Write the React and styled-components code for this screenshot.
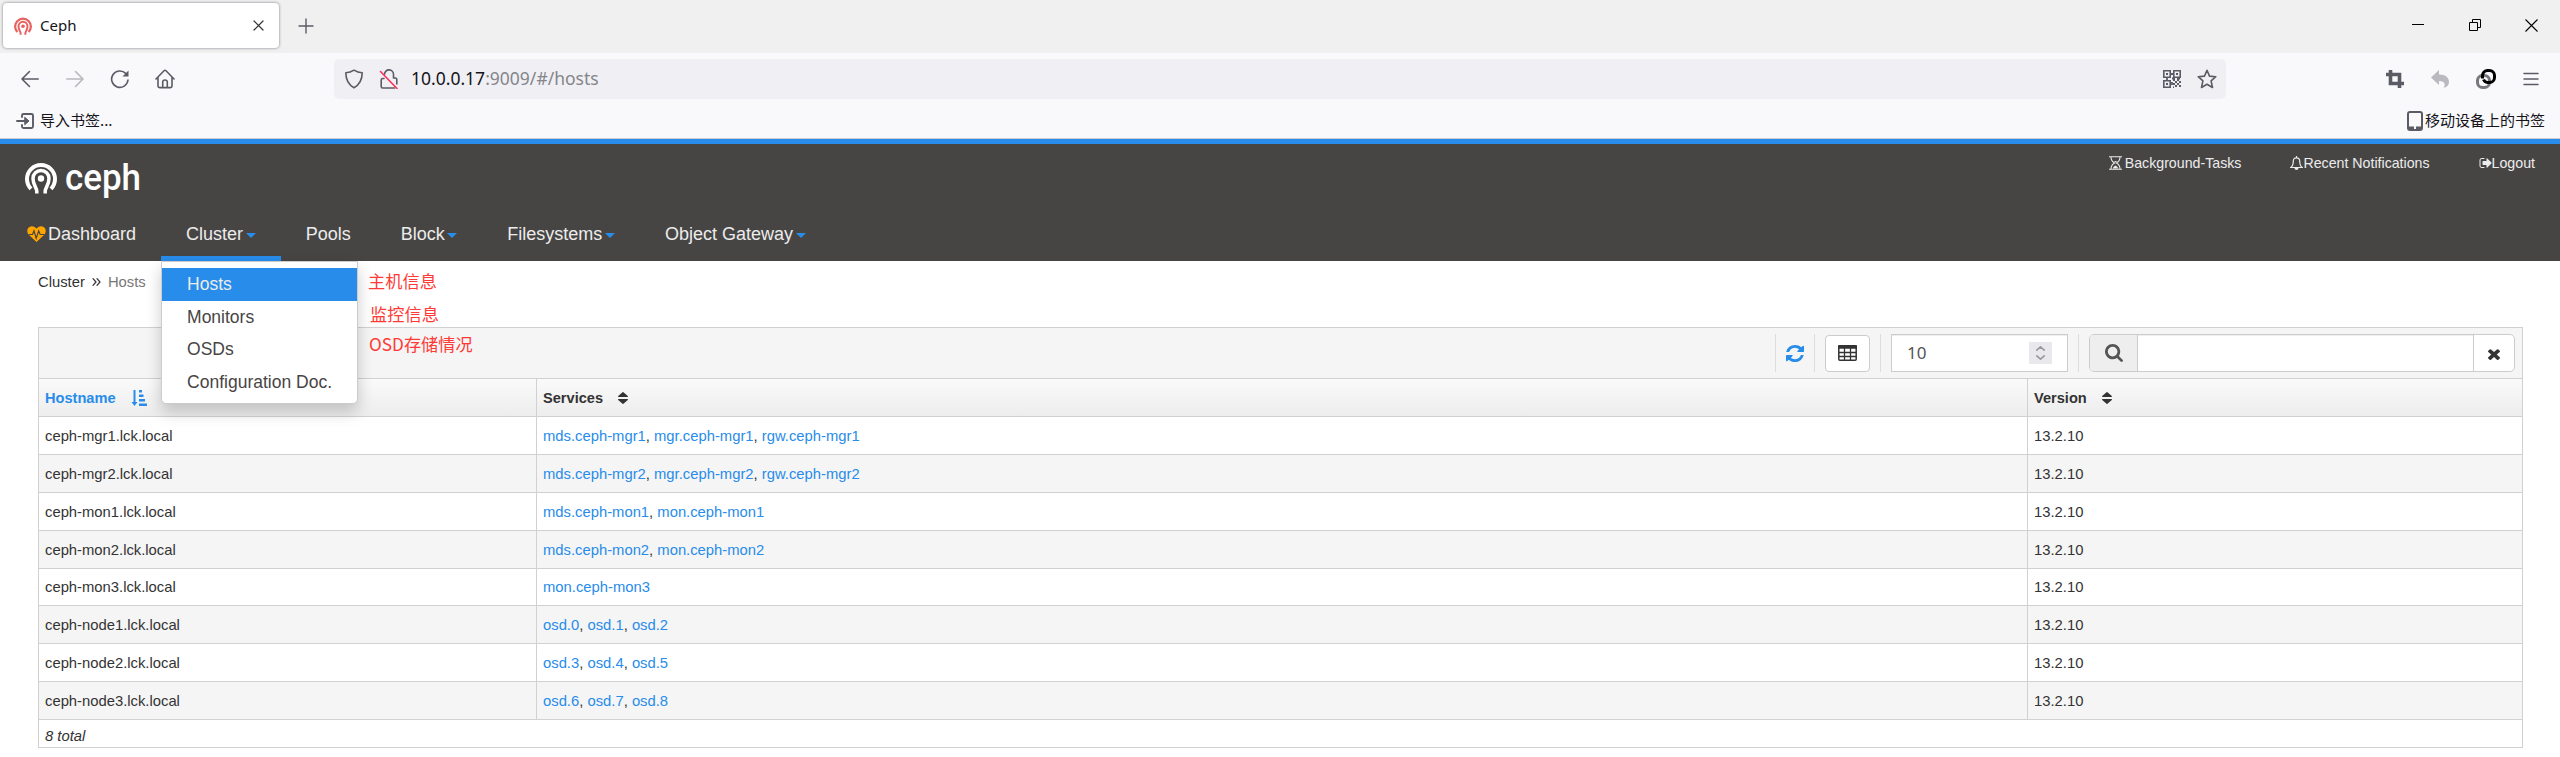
import styled, { createGlobalStyle, css } from 'styled-components';

const hosts = [
  { name: 'ceph-mgr1.lck.local', services: ['mds.ceph-mgr1', 'mgr.ceph-mgr1', 'rgw.ceph-mgr1'] },
  { name: 'ceph-mgr2.lck.local', services: ['mds.ceph-mgr2', 'mgr.ceph-mgr2', 'rgw.ceph-mgr2'] },
  { name: 'ceph-mon1.lck.local', services: ['mds.ceph-mon1', 'mon.ceph-mon1'] },
  { name: 'ceph-mon2.lck.local', services: ['mds.ceph-mon2', 'mon.ceph-mon2'] },
  { name: 'ceph-mon3.lck.local', services: ['mon.ceph-mon3'] },
  { name: 'ceph-node1.lck.local', services: ['osd.0', 'osd.1', 'osd.2'] },
  { name: 'ceph-node2.lck.local', services: ['osd.3', 'osd.4', 'osd.5'] },
  { name: 'ceph-node3.lck.local', services: ['osd.6', 'osd.7', 'osd.8'] },
];

const menu = ['Hosts', 'Monitors', 'OSDs', 'Configuration Doc.'];

const paths = {
  refresh: 'M1511 1056q0 5-1 7-64 268-268 434.500t-478 166.500q-146 0-282.500-55t-243.500-157l-129 129q-19 19-45 19t-45-19-19-45v-448q0-26 19-45t45-19h448q26 0 45 19t19 45-19 45l-137 137q71 66 161 102t187 36q134 0 250-65t186-179q11-17 53-117 8-23 30-23h192q13 0 22.500 9.500t9.500 22.500zm25-800v448q0 26-19 45t-45 19h-448q-26 0-45-19t-19-45 19-45l138-138q-148-137-349-137-134 0-250 65t-186 179q-11 17-53 117-8 23-30 23h-199q-13 0-22.500-9.500t-9.500-22.500v-7q65-268 270-434.500t480-166.500q146 0 284 55.500t245 156.500l130-129q19-19 45-19t45 19 19 45z',
  times: 'M1490 1322q0 40-28 68l-136 136q-28 28-68 28t-68-28l-294-294-294 294q-28 28-68 28t-68-28l-136-136q-28-28-28-68t28-68l294-294-294-294q-28-28-28-68t28-68l136-136q28-28 68-28t68 28l294 294 294-294q28-28 68-28t68 28l136 136q28 28 28 68t-28 68l-294 294 294 294q28 28 28 68z',
  search: 'M1216 832q0-185-131.500-316.500t-316.500-131.500-316.500 131.500-131.500 316.500 131.500 316.500 316.500 131.500 316.500-131.500 131.500-316.500zm512 832q0 52-38 90t-90 38q-54 0-90-38l-343-342q-179 124-399 124-143 0-273.500-55.500t-225-150-150-225-55.500-273.500 55.500-273.500 150-225 225-150 273.500-55.500 273.500 55.500 225 150 150 225 55.500 273.500q0 220-124 399l343 343q37 37 37 90z',
  sort: 'M1408 1088q0 26-19 45l-448 448q-19 19-45 19t-45-19l-448-448q-19-19-19-45t19-45 45-19h896q26 0 45 19t19 45zm0-384q0 26-19 45t-45 19h-896q-26 0-45-19t-19-45 19-45l448-448q19-19 45-19t45 19l448 448q19 19 19 45z',
  signOut: 'M704 1440q0 4 1 20t.5 26.500-3 23.500-10 19.500-20.500 6.500h-320q-119 0-203.500-84.500t-84.500-203.500v-704q0-119 84.500-203.500t203.500-84.500h320q13 0 22.500 9.500t9.500 22.500q0 4 1 20t.5 26.500-3 23.500-10 19.500-20.500 6.500h-320q-66 0-113 47t-47 113v704q0 66 47 113t113 47h312l11.500 1 11.500 3 8 5.500 7 9 2 13.500zm928-544q0 26-19 45l-544 544q-19 19-45 19t-45-19-19-45v-288h-448q-26 0-45-19t-19-45v-384q0-26 19-45t45-19h448v-288q0-26 19-45t45-19 45 19l544 544q19 19 19 45z',
};

const Glyph = ({ d, box, w, h }) => (
  <svg viewBox={box} width={w} height={h} fill="currentColor" preserveAspectRatio="none"><path d={d} /></svg>
);

const CephMark = ({ size }) => (
  <svg width={size} height={size} viewBox="0 0 32 32" fill="none" stroke="currentColor">
    <path d="M6 26.800A14 14 0 1 1 26 26.800" strokeWidth="4" />
    <path d="M11.800 31.500V29C11.800 26 8 23 8 16.500A8 8 0 0 1 24 16.500C24 23 20.200 26 20.200 29V31.500" strokeWidth="3.500" />
    <circle cx="16" cy="16.500" r="3.200" fill="currentColor" stroke="none" />
  </svg>
);

const Line = ({ w = 20, h = 20, box = '0 0 20 20', sw = 1.6, children }) => (
  <svg width={w} height={h} viewBox={box} fill="none" stroke="currentColor" strokeWidth={sw} strokeLinecap="round" strokeLinejoin="round">{children}</svg>
);

export default function App() {
  return (
    <>
      <GlobalStyle />
      <TabStrip>
        <Tab>
          <Favicon><CephMark size={18} /></Favicon>
          <TabTitle>Ceph</TabTitle>
          <Line w={11} h={11} box="0 0 11 11" sw={1.2}><path d="M1 1l9 9M10 1l-9 9" /></Line>
        </Tab>
        <NewTab>
          <Line w={16} h={16} box="0 0 16 16" sw={1.4}><path d="M8 1v14M1 8h14" /></Line>
        </NewTab>
        <WindowButtons>
          <svg width="12" height="12" fill="none" stroke="#000"><path d="M0 5.500h12" /></svg>
          <svg width="12" height="12" fill="none" stroke="#000"><path d="M.5 3.500h8v8h-8zM3.500 3.500v-3h8v8h-3" /></svg>
          <svg width="13" height="13" fill="none" stroke="#000" strokeWidth="1.100"><path d="M.5.500l12 12M12.500.500l-12 12" /></svg>
        </WindowButtons>
      </TabStrip>

      <NavBar>
        <NavButtons>
          <Line><path d="M18.200 10H2M9.500 2.500L2 10l7.500 7.500" /></Line>
          <Faded><Line><path d="M1.800 10H18M10.500 2.500L18 10l-7.500 7.500" /></Line></Faded>
          <Line>
            <path d="M18 11a8.200 8.200 0 1 1-2.300-6.600" />
            <path d="M18.500 1.500v6h-6z" fill="currentColor" stroke="none" />
          </Line>
          <Line>
            <path d="M1 10l8-8.300a1.400 1.400 0 0 1 2 0l8 8.300M3 8.500V17a1.600 1.600 0 0 0 1.600 1.600h10.800A1.600 1.600 0 0 0 17 17V8.500M7.700 18.500v-5.200a2.300 2.300 0 0 1 4.600 0v5.200" />
          </Line>
        </NavButtons>
        <UrlBar>
          <Line>
            <path d="M10 1.200c2.500 1.700 5.300 2.500 8.200 2.600 0 7-2 11.500-8.200 15C3.800 15.300 1.800 10.800 1.800 3.800 4.700 3.700 7.500 2.900 10 1.200z" />
          </Line>
          <LockIcon>
            <Line>
              <path d="M5.500 5.200a4.500 4.500 0 0 1 9 .300V9h1.800a1.500 1.500 0 0 1 1.500 1.500V15M5 9.500H3.700a1.500 1.500 0 0 0-1.500 1.500v6.500A1.500 1.500 0 0 0 3.700 19h12" />
              <path d="M1.500 2.500l16.500 17" stroke="#ff2f5c" />
            </Line>
          </LockIcon>
          <UrlText>10.0.0.17<span>:9009/#/hosts</span></UrlText>
          <svg width="18" height="18" viewBox="0 0 18 18" fill="none" stroke="#5b5b66" strokeWidth="1.600">
            <path d="M.8.800h6.400v6.400H.8zM10.800.800h6.400v6.400h-6.400zM.8 10.800h6.400v6.400H.8z" />
            <path d="M3 4h2M13 4h2M3 14h2" strokeWidth="2" />
            <path d="M10 10h2M14 10h2M12 12h2M16 12h2M10 14h2M14 14h2M12 16h2M16 16h2M10 17.500h1M7 4h4M4 7v4M9 8.500h3M14 8.500h3M9 12v3" strokeWidth="1.800" />
          </svg>
          <StarIcon>
            <Line><path d="M10 1.300l2.500 5.800 6.300.600-4.700 4.200 1.400 6.600L10 15.200l-5.500 3.300 1.400-6.600L1.200 7.700l6.300-.6z" /></Line>
          </StarIcon>
        </UrlBar>
        <Extensions>
          <svg width="18" height="18" fill="none" stroke="currentColor" strokeWidth="3.600"><path d="M0 4.500h13.500V18M4.500 0v13.500H18" /></svg>
          <Faded>
            <svg width="18" height="18" fill="currentColor"><path d="M8 0v4.500c6.500 0 10 3 10 7.500 0 3-1.800 5-5.500 6 2-2.500 2.300-7-4.500-7V15L0 7.500z" /></svg>
          </Faded>
          <svg width="20" height="20" fill="none" strokeWidth="3">
            <rect x="1.500" y="6.500" width="12" height="12" rx="5" stroke="#77777c" />
            <path d="M6.500 9.500v-3a5 5 0 0 1 5-5h2a5 5 0 0 1 5 5v2a5 5 0 0 1-5 5h-2a5 5 0 0 1-4-3" stroke="#000" />
          </svg>
          <Line w={16} h={14} box="0 0 16 14" sw={1.5}><path d="M1 1.500h14M1 7h14M1 12.500h14" /></Line>
        </Extensions>
      </NavBar>

      <BookmarkBar>
        <Bookmark $gap={6}>
          <Line w={18} h={16} box="0 0 18 16" sw={1.9}>
            <path d="M6 4V2.500A1.500 1.500 0 0 1 7.500 1h8A1.500 1.500 0 0 1 17 2.500v11a1.500 1.500 0 0 1-1.500 1.500h-8A1.500 1.500 0 0 1 6 13.500V12M1 8h9" />
            <path d="M9 4.500L13 8l-4 3.500z" fill="currentColor" strokeWidth="1" />
          </Line>
          <span>导入书签...</span>
        </Bookmark>
        <Bookmark $gap={2}>
          <svg width="16" height="20" fill="none" stroke="currentColor">
            <rect x="1" y="1" width="14" height="18" rx="2" strokeWidth="2" />
            <path d="M2 17h5M9 17h5" strokeWidth="3" />
          </svg>
          <span>移动设备上的书签</span>
        </Bookmark>
      </BookmarkBar>

      <Header>
        <TopRow>
          <Logo>
            <CephMark size={32} />
            <svg width="78" height="52" fill="currentColor">
              <text x="0" y="37" textLength="76" lengthAdjust="spacingAndGlyphs" fontFamily="Roboto, sans-serif" fontWeight="500" fontSize="36">ceph</text>
            </svg>
          </Logo>
          <UserLinks>
            <UserLink $gap={2}>
              <svg width="14" height="14" fill="none" stroke="currentColor" strokeWidth="1.100">
                <path d="M0 .7h13M0 13.300h13M2 1c0 3 1 4.500 3.500 6C3 8.500 2 10 2 13M11 1c0 3-1 4.500-3.500 6C10 8.500 11 10 11 13" />
                <path d="M4 12.500c0-1.500 1-2 2.500-3 1.500 1 2.500 1.500 2.500 3zM5 5h3L6.500 6.500z" fill="currentColor" stroke="none" />
              </svg>
              Background-Tasks
            </UserLink>
            <UserLink>
              <svg width="13" height="15" fill="none" stroke="currentColor" strokeWidth="1.200">
                <path d="M.8 11.500c2-1.500 2.500-3.500 2.500-6.500 0-2 1.200-3.200 3.200-3.200S9.700 3 9.700 5c0 3 .5 5 2.500 6.500zM6.500 0v2" />
                <path d="M4.500 12h4a2 2 0 0 1-4 0z" fill="currentColor" stroke="none" />
              </svg>
              Recent Notifications
            </UserLink>
            <UserLink>
              <Glyph d={paths.signOut} box="0 128 1664 1536" w={13} h={12} />
              Logout
            </UserLink>
          </UserLinks>
        </TopRow>
        <MainNav>
          <NavItem>
            <HeartIcon>
              <svg width="19" height="16" viewBox="0 0 19 16">
                <path d="M9.500 16L2 9C-1 6 0 .300 4.800.300 7 .300 8.500 1.500 9.500 2.700 10.500 1.500 12 .300 14.200.300 19 .300 20 6 17 9z" fill="#ffa500" />
                <path d="M1.500 8.500h4l1.500-3.600 2.200 7.300 2.500-7.300 1.500 3.600h4.300" fill="none" stroke="#474544" strokeWidth="1.200" />
              </svg>
            </HeartIcon>
            Dashboard
          </NavItem>
          <NavItem $active>
            Cluster<Caret />
            <Dropdown>
              {menu.map((m, i) => <DropdownItem key={m} $active={i === 0}>{m}</DropdownItem>)}
              <Note $x={206} $y={9}>主机信息</Note>
              <Note $x={208} $y={42}>监控信息</Note>
              <Note $x={207} $y={72}>OSD存储情况</Note>
            </Dropdown>
          </NavItem>
          <NavItem>Pools</NavItem>
          <NavItem>Block<Caret /></NavItem>
          <NavItem>Filesystems<Caret /></NavItem>
          <NavItem>Object Gateway<Caret /></NavItem>
        </MainNav>
      </Header>

      <Content>
        <Breadcrumb>
          Cluster
          <Line w={9} h={8} box="0 0 9 8" sw={1.2}><path d="M1 .700L4 4 1 7.300M5 .700L8 4 5 7.300" /></Line>
          <span>Hosts</span>
        </Breadcrumb>
        <DataTable>
          <Toolbar>
            <ToolGroup $w={39.5} $blue>
              <Glyph d={paths.refresh} box="0 128 1536 1536" w={18} h={17} />
            </ToolGroup>
            <ToolGroup $w={66}>
              <ColumnsButton>
                <svg width="19" height="16" fill="none" stroke="currentColor">
                  <rect x=".8" y=".8" width="17.400" height="14.400" rx="1" strokeWidth="1.500" />
                  <path d="M0 2h19" strokeWidth="3.500" />
                  <path d="M6.500 2v13M12.500 2v13M1 7.500h17M1 11.500h17" strokeWidth="1.300" />
                </svg>
              </ColumnsButton>
            </ToolGroup>
            <ToolGroup $w={198}>
              <PageSize>
                <span>10</span>
                <Spinner>
                  <Line w={9} h={14} box="0 0 9 14" sw={1.7}><path d="M.8 4.200L4.500.800l3.700 3.400M.8 9.800l3.700 3.400 3.700-3.400" /></Line>
                </Spinner>
              </PageSize>
            </ToolGroup>
            <ToolGroup $w={444}>
              <SearchBox>
                <Addon><Glyph d={paths.search} box="64 128 1664 1664" w={18} h={18} /></Addon>
                <SearchInput />
                <ClearButton><Glyph d={paths.times} box="302 238 1188 1316" w={12} h={12} /></ClearButton>
              </SearchBox>
            </ToolGroup>
          </Toolbar>
          <HeadRow>
            <Cell $blue>
              Hostname
              <svg width="16" height="16" fill="currentColor">
                <path d="M2.500 0h2v12H6.500L3.500 16 .500 12h2zM8 0h3v2.500H8zM8 4.500h4.500V7H8zM8 9h6v2.500H8zM8 13.500h8V16H8z" />
              </svg>
            </Cell>
            <Cell>Services<Glyph d={paths.sort} box="384 192 1024 1408" w={10} h={12} /></Cell>
            <Cell>Version<Glyph d={paths.sort} box="384 192 1024 1408" w={10} h={12} /></Cell>
          </HeadRow>
          {hosts.map((h) => (
            <Row key={h.name}>
              <Cell>{h.name}</Cell>
              <Cell>
                <div>
                  {h.services.map((s, i) => (
                    <span key={s}>{i > 0 && ', '}<ServiceLink>{s}</ServiceLink></span>
                  ))}
                </div>
              </Cell>
              <Cell>13.2.10</Cell>
            </Row>
          ))}
          <Footer>8 total</Footer>
        </DataTable>
      </Content>
    </>
  );
}

const GlobalStyle = createGlobalStyle`
* {
  box-sizing: border-box;
}
body {
  margin: 0;
  background: #fff;
  font-family: "Liberation Sans", "Noto Sans CJK SC", sans-serif;
  font-size: 14.8px;
  color: #333;
}
svg {
  display: block;
  flex: none;
}
`;

const TabStrip = styled.div`
display: flex;
height: 53px;
padding: 3px 22px 0 3px;
background: #f0f0f0;
`;

const Tab = styled.div`
display: flex;
align-items: center;
width: 276px;
height: 45px;
padding: 0 15px 0 11px;
border-radius: 4px;
background: #fff;
box-shadow: 0 0 3px rgba(40, 40, 60, 0.6);
color: #333;
`;

const Favicon = styled.div`
color: #e9605f;
`;

const TabTitle = styled.div`
flex: 1;
padding: 0 0 1px 8px;
font: 15px "Noto Sans", sans-serif;
color: #15141a;
`;

const NewTab = styled.div`
padding: 15px 0 0 19px;
color: #5b5b66;
`;

const WindowButtons = styled.div`
display: flex;
gap: 44px;
margin-left: auto;
padding-top: 16px;
svg:first-child {
  margin-right: 1px;
}
`;

const NavBar = styled.div`
display: flex;
align-items: center;
height: 51px;
padding: 0 21px 0 20px;
background: #f9f9fb;
color: #5b5b66;
`;

const NavButtons = styled.div`
display: flex;
gap: 25px;
width: 314px;
`;

const Faded = styled.div`
opacity: 0.4;
`;

const UrlBar = styled.div`
display: flex;
align-items: center;
width: 1892px;
height: 40px;
padding: 0 9px 0 10px;
border-radius: 5px;
background: #f0f0f4;
`;

const LockIcon = styled.div`
padding-left: 15px;
`;

const StarIcon = styled.div`
padding-left: 16px;
`;

const UrlText = styled.div`
flex: 1;
padding: 0 0 1px 12px;
font: 17.5px "Noto Sans", sans-serif;
color: #15141a;
span {
  color: #85858b;
}
`;

const Extensions = styled.div`
display: flex;
align-items: center;
gap: 27px;
margin-left: auto;
`;

const BookmarkBar = styled.div`
display: flex;
justify-content: space-between;
height: 35px;
padding: 0 15px 0 16px;
border-bottom: 1px solid #ccc;
background: #f9f9fb;
`;

const Bookmark = styled.div`
display: flex;
align-items: center;
gap: ${(p) => p.$gap}px;
height: 34px;
font: 15px "Noto Sans CJK SC", sans-serif;
color: #15141a;
svg {
  color: #5b5b66;
}
span {
  padding-bottom: 3px;
}
`;

const Header = styled.div`
display: flex;
flex-direction: column;
height: 122px;
border-top: 5px solid #288cea;
background: #474544;
color: #ececec;
`;

const TopRow = styled.div`
display: flex;
justify-content: space-between;
flex: 1;
padding: 0 25px;
`;

const Logo = styled.div`
display: flex;
gap: 8px;
height: 40px;
padding-top: 18px;
color: #fff;
svg:last-child {
  margin-top: -9px;
}
`;

const UserLinks = styled.div`
display: flex;
gap: 49px;
height: 38px;
`;

const UserLink = styled.div`
display: flex;
align-items: center;
gap: ${(p) => p.$gap || 0}px;
font-size: 14.2px;
`;

const MainNav = styled.div`
display: flex;
height: 55px;
`;

const NavItem = styled.div`
position: relative;
display: flex;
align-items: center;
padding: 7px 25px 0;
border-bottom: 5px solid ${(p) => (p.$active ? '#288cea' : 'transparent')};
font-size: 18px;
`;

const HeartIcon = styled.div`
width: 23px;
padding: 0 0 2px 2px;
`;

const Caret = styled.i`
margin: 2px 0 0 2.6px;
border-top: 5px solid #288cea;
border-left: 5px solid transparent;
border-right: 5px solid transparent;
`;

const Dropdown = styled.div`
position: absolute;
z-index: 2;
top: 55px;
left: 0;
width: 197px;
height: 143px;
padding: 6px 0;
border: 1px solid #ccc;
border-radius: 0 0 5px 5px;
background: #fff;
box-shadow: 0 8px 16px rgba(0, 0, 0, 0.2);
font-size: 17.5px;
`;

const DropdownItem = styled.div`
height: 32.7px;
padding-left: 25px;
line-height: 32px;
color: ${(p) => (p.$active ? '#ececec' : '#474544')};
background: ${(p) => (p.$active ? '#288cea' : 'none')};
`;

// red remarks written beside the open menu
const Note = styled.div`
position: absolute;
left: ${(p) => p.$x}px;
top: ${(p) => p.$y}px;
font: 17.2px/20px "Noto Sans CJK SC", sans-serif;
white-space: nowrap;
color: #ff3a36;
`;

const Content = styled.div`
padding: 0 37px 0 38px;
`;

const Breadcrumb = styled.div`
display: flex;
align-items: center;
gap: 7px;
height: 66px;
padding-bottom: 25px;
span {
  color: #777;
}
`;

const DataTable = styled.div`
border: 1px solid #d1d1d1;
border-bottom: none;
`;

const Toolbar = styled.div`
display: flex;
justify-content: flex-end;
height: 51px;
padding: 6px 0;
border-bottom: 1px solid #d1d1d1;
background: #f5f5f5;
`;

const ToolGroup = styled.div`
display: flex;
align-items: center;
width: ${(p) => p.$w}px;
height: 38px;
padding: 0 0 0 10px;
border-left: 1px solid #ddd;
color: ${(p) => (p.$blue ? '#288cea' : '#333')};
`;

const ColumnsButton = styled.div`
display: flex;
align-items: center;
justify-content: center;
width: 45px;
height: 37px;
border: 1px solid #ccc;
border-radius: 4px;
background: #fff;
`;

const PageSize = styled.div`
display: flex;
align-items: center;
justify-content: space-between;
width: 177px;
height: 38px;
padding: 0 15px;
border: 1px solid #ccc;
background: #fff;
box-shadow: inset 0 1px 1px rgba(0, 0, 0, 0.075);
font: 17px "Noto Sans", sans-serif;
color: #555;
span {
  padding-bottom: 2px;
}
`;

const Spinner = styled.div`
display: flex;
align-items: center;
justify-content: center;
width: 23px;
height: 22px;
background: #e9e9ed;
color: #9a9aa5;
`;

const SearchBox = styled.div`
display: flex;
width: 426px;
height: 38px;
border: 1px solid #ccc;
border-radius: 5px;
background: #fff;
overflow: hidden;
`;

const Addon = styled.div`
display: flex;
align-items: center;
justify-content: center;
width: 48px;
border-right: 1px solid #ccc;
background: #eee;
color: #555;
`;

const SearchInput = styled.div`
flex: 1;
box-shadow: inset 0 1px 1px rgba(0, 0, 0, 0.075);
`;

const ClearButton = styled.div`
display: flex;
align-items: center;
justify-content: center;
width: 41px;
padding-top: 2px;
border-left: 1px solid #ccc;
`;

const columns = css`
display: grid;
grid-template-columns: 497px 1491px 1fr;
`;

const Cell = styled.div`
display: flex;
align-items: center;
padding: 1px 0 0 6px;
color: ${(p) => (p.$blue ? '#288cea' : '#333')};
& + & {
  border-left: 1px solid #d1d1d1;
}
`;

const HeadRow = styled.div`
${columns}
height: 38px;
border-bottom: 1px solid #d1d1d1;
background: linear-gradient(#fafafa, #ededed);
font-size: 14.6px;
font-weight: bold;
svg {
  margin-left: 15px;
}
`;

const Row = styled.div`
${columns}
height: 37.875px;
border-bottom: 1px solid #d1d1d1;
&:nth-child(even) {
  background: #f5f5f5;
}
`;

const ServiceLink = styled.a`
color: #288cea;
`;

const Footer = styled.div`
height: 28px;
padding: 7px 6px 0;
border-bottom: 1px solid #d1d1d1;
line-height: 18px;
font-style: italic;
`;
